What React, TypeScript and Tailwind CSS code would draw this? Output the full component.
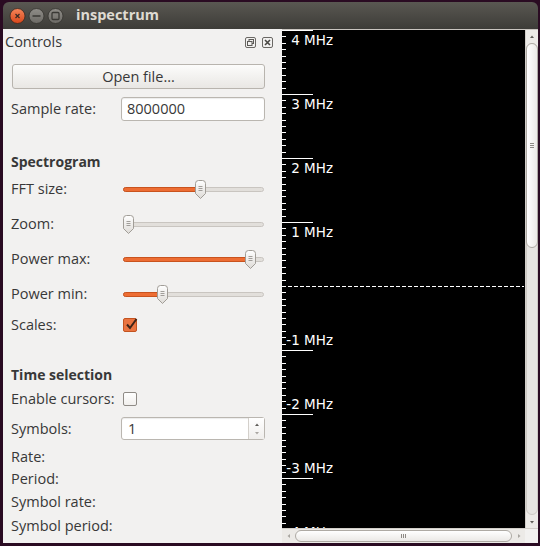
import React from "react";

const font = { fontFamily: '"Open Sans", "DejaVu Sans", sans-serif' };

const Handle = () => (
  <svg width="13" height="20" viewBox="0 0 13 20">
    <defs>
      <linearGradient id="hg" x1="0" y1="0" x2="0" y2="1">
        <stop offset="0" stopColor="#ffffff" />
        <stop offset="1" stopColor="#dedbd7" />
      </linearGradient>
    </defs>
    <path
      d="M1.5 3.5 Q1.5 0.5 4.5 0.5 H8.5 Q11.5 0.5 11.5 3.5 V13.5 L6.5 18.5 L1.5 13.5 Z"
      fill="url(#hg)"
      stroke="#a19d97"
    />
    <path d="M4.5 6.5 H8.5 M4.5 8.5 H8.5 M4.5 10.5 H8.5" stroke="#8d8984" strokeWidth="0.8" />
  </svg>
);

const Slider = ({ pos }: { pos: number }) => (
  <div className="relative w-[141px] h-[20px] ml-[2px] flex items-center">
    <div className="w-full h-[5px] rounded-full bg-[#e2dfdb] border border-[#c9c5c0]" />
    <div
      className="absolute left-0 top-[7.5px] h-[5px] rounded-full bg-[#ed6d33] border border-[#c9531e]"
      style={{ width: pos }}
    />
    <div className="absolute top-[1px]" style={{ left: Math.max(pos - 6.5, -1) }}>
      <Handle />
    </div>
  </div>
);

const Label = ({ children }: { children: React.ReactNode }) => (
  <span className="w-[110px] shrink-0 whitespace-nowrap">{children}</span>
);

const Row = ({ h, children }: { h: string; children: React.ReactNode }) => (
  <div className={`flex items-center ${h}`}>{children}</div>
);

const Spectrum = () => {
  const ticks = Array.from({ length: 81 }, (_, i) => i);
  const labels = [4, 3, 2, 1, -1, -2, -3, -4];
  return (
    <svg width="242" height="498" className="block" shapeRendering="crispEdges">
      {ticks.map((i) => {
        const y = Math.round(i * 6.4) + 0.5;
        if (i === 40)
          return <line key={i} x1="0" x2="242" y1={y} y2={y} stroke="#fff" strokeDasharray="4 2" />;
        return (
          <line key={i} x1="0" x2={i % 10 === 0 ? 31 : 4} y1={y} y2={y} stroke="#fff" />
        );
      })}
      {labels.map((k) => {
        const y = (4 - k) * 64;
        return (
          <text
            key={k}
            x="51"
            y={k > 0 ? y + 15 : y - 5}
            textAnchor="end"
            fill="#fff"
            fontSize="13.5"
            fontFamily='"DejaVu Sans", sans-serif'
          >
            {k} MHz
          </text>
        );
      })}
    </svg>
  );
};

const Arrow = ({ dir, dim }: { dir: "up" | "down" | "left" | "right"; dim?: boolean }) => {
  const pts = {
    up: "2,5 4,2.5 6,5",
    down: "2,3 4,5.5 6,3",
    left: "5,2 2.5,4 5,6",
    right: "3,2 5.5,4 3,6",
  }[dir];
  return (
    <svg width="8" height="8" viewBox="0 0 8 8">
      <polygon points={pts} fill={dim ? "#a9a6a1" : "#5e5c58"} />
    </svg>
  );
};

export default function App() {
  return (
    <div
      className="w-[540px] h-[546px] bg-[#2a0b22] overflow-hidden pt-[2px] pl-[3px] pr-[2px] pb-[3px] text-[#383838]"
      style={font}
    >
      <div className="h-full flex flex-col rounded-t-[6px] overflow-hidden">
        {/* title bar */}
        <div className="h-[27px] shrink-0 flex items-center bg-gradient-to-b from-[#5a5852] to-[#3d3c38] pl-[6px]">
          <svg width="60" height="18" viewBox="0 0 60 18">
            <defs>
              <linearGradient id="cl" x1="0" y1="0" x2="0" y2="1">
                <stop offset="0" stopColor="#f6865a" />
                <stop offset="1" stopColor="#d8461a" />
              </linearGradient>
              <linearGradient id="gr" x1="0" y1="0" x2="0" y2="1">
                <stop offset="0" stopColor="#8f8d88" />
                <stop offset="1" stopColor="#6c6a65" />
              </linearGradient>
            </defs>
            <circle cx="8.5" cy="9" r="7.5" fill="url(#cl)" stroke="#3a2a22" strokeWidth="0.8" />
            <path d="M6.5 7 L10.5 11 M10.5 7 L6.5 11" stroke="#3c2b24" strokeWidth="1.3" />
            <circle cx="27.5" cy="9" r="7.5" fill="url(#gr)" stroke="#35342f" strokeWidth="0.8" />
            <path d="M23.5 9 H31.5" stroke="#3a3935" strokeWidth="1.5" />
            <circle cx="46.5" cy="9" r="7.5" fill="url(#gr)" stroke="#35342f" strokeWidth="0.8" />
            <rect x="43" y="5.5" width="7" height="7" rx="1" fill="none" stroke="#3a3935" strokeWidth="1.3" />
          </svg>
          <span className="ml-[7px] text-[14.5px] font-bold text-[#dfdbd2] leading-none">inspectrum</span>
        </div>

        <div className="flex-1 flex min-h-0">
          {/* controls dock */}
          <div className="w-[279px] shrink-0 bg-[#f2f1f0] flex flex-col text-[14.5px] overflow-hidden">
            <div className="h-[26px] flex items-center pl-[2px] pr-[9px]">
              <span className="flex-1">Controls</span>
              <svg width="11" height="11" viewBox="0 0 11 11" className="mr-[6px]">
                <rect x="0.5" y="0.5" width="10" height="10" rx="1.5" fill="none" stroke="#6a6864" />
                <rect x="4" y="2.5" width="4.5" height="4" fill="none" stroke="#5c5a56" />
                <rect x="2.5" y="4.5" width="4.5" height="4" fill="#f2f1f0" stroke="#5c5a56" />
              </svg>
              <svg width="11" height="11" viewBox="0 0 11 11">
                <rect x="0.5" y="0.5" width="10" height="10" rx="1.5" fill="none" stroke="#6a6864" />
                <path d="M3 3 L8 8 M8 3 L3 8" stroke="#4a4844" strokeWidth="1.6" />
              </svg>
            </div>

            <div className="flex flex-col pl-[8px] pr-[17px]">
              <button className="mt-[9px] ml-[1px] h-[25px] rounded-[3px] border border-[#b8b4ae] bg-gradient-to-b from-[#fcfcfb] to-[#e9e7e4] text-[14.5px] text-[#383838]">
                Open file...
              </button>
              <div className="mt-[8px] h-[24px] flex items-center">
                <Label>Sample rate:</Label>
                <div className="flex-1 h-[24px] rounded-[3px] border border-[#bab6b0] bg-white flex items-center pl-[5px] shadow-[inset_0_1px_1px_rgba(0,0,0,0.08)]">
                  8000000
                </div>
              </div>

              <div className="mt-[29px] h-[22px] flex items-center font-bold text-[14px]">Spectrogram</div>
              <Row h="h-[34px]">
                <Label>FFT size:</Label>
                <Slider pos={77} />
              </Row>
              <Row h="h-[36px]">
                <Label>Zoom:</Label>
                <Slider pos={4} />
              </Row>
              <Row h="h-[34px]">
                <Label>Power max:</Label>
                <Slider pos={127} />
              </Row>
              <Row h="h-[36px]">
                <Label>Power min:</Label>
                <Slider pos={39} />
              </Row>
              <Row h="h-[26px]">
                <Label>Scales:</Label>
                <div className="ml-[2px] w-[14px] h-[14px] rounded-[2px] bg-[#ea7440] border border-[#c3531f] relative">
                  <svg width="16" height="16" viewBox="0 0 16 16" className="absolute left-[0px] top-[-3px]">
                    <path d="M3 8.5 L6 12 L12.5 3" fill="none" stroke="#3d2418" strokeWidth="2" />
                  </svg>
                </div>
              </Row>

              <div className="mt-[25px] h-[22px] flex items-center font-bold text-[14px]">Time selection</div>
              <Row h="h-[27px]">
                <Label>Enable cursors:</Label>
                <div className="ml-[2px] w-[14px] h-[14px] rounded-[2px] bg-gradient-to-b from-white to-[#f1efed] border border-[#8f8b86]" />
              </Row>
              <Row h="h-[33px]">
                <Label>Symbols:</Label>
                <div className="flex-1 h-[23px] rounded-[3px] border border-[#bab6b0] bg-white flex shadow-[inset_0_1px_1px_rgba(0,0,0,0.08)]">
                  <span className="flex-1 pl-[6px] flex items-center">1</span>
                  <div className="w-[16px] border-l border-[#d4d0cb] flex flex-col items-center justify-center bg-gradient-to-b from-white to-[#f0eeec]">
                    <Arrow dir="up" />
                    <Arrow dir="down" dim />
                  </div>
                </div>
              </Row>
              <Row h="h-[23px]">
                <Label>Rate:</Label>
              </Row>
              <Row h="h-[22px]">
                <Label>Period:</Label>
              </Row>
              <Row h="h-[24px]">
                <Label>Symbol rate:</Label>
              </Row>
              <Row h="h-[23px]">
                <Label>Symbol period:</Label>
              </Row>
            </div>
          </div>

          {/* spectrum view */}
          <div className="flex-1 flex flex-col min-w-0 border-t border-[#c9c5c0]">
            <div className="flex-1 flex min-h-0">
              <div className="flex-1 bg-black overflow-hidden">
                <Spectrum />
              </div>
              <div className="w-[13px] bg-[#eceae7] border-l border-[#d2cec9] flex flex-col items-center">
                <div className="h-[13px] flex items-center justify-center">
                  <Arrow dir="up" />
                </div>
                <div className="flex-1 w-[12px] rounded-full border border-[#cdc9c4] bg-[#e6e4e1] flex flex-col">
                  <div className="h-[205px] rounded-full border border-[#aeaaa4] bg-gradient-to-r from-white to-[#ebe9e6] flex flex-col items-center justify-center gap-[1px] -m-px">
                    <div className="w-[4px] h-px bg-[#8d8984]" />
                    <div className="w-[4px] h-px bg-[#8d8984]" />
                    <div className="w-[4px] h-px bg-[#8d8984]" />
                  </div>
                </div>
                <div className="h-[13px] flex items-center justify-center">
                  <Arrow dir="down" />
                </div>
              </div>
            </div>
            <div className="h-[15px] shrink-0 flex bg-[#eceae7] border-t border-[#d2cec9]">
              <div className="flex-1 flex items-center">
                <div className="w-[13px] flex justify-center">
                  <Arrow dir="left" dim />
                </div>
                <div className="flex-1 h-[12px] rounded-full border border-[#aeaaa4] bg-gradient-to-b from-white to-[#ebe9e6] flex items-center justify-center gap-[1px]">
                  <div className="w-px h-[4px] bg-[#8d8984]" />
                  <div className="w-px h-[4px] bg-[#8d8984]" />
                  <div className="w-px h-[4px] bg-[#8d8984]" />
                </div>
                <div className="w-[13px] flex justify-center">
                  <Arrow dir="right" dim />
                </div>
              </div>
              <div className="w-[13px] bg-[#f2f1f0]" />
            </div>
          </div>
        </div>
      </div>
    </div>
  );
}
